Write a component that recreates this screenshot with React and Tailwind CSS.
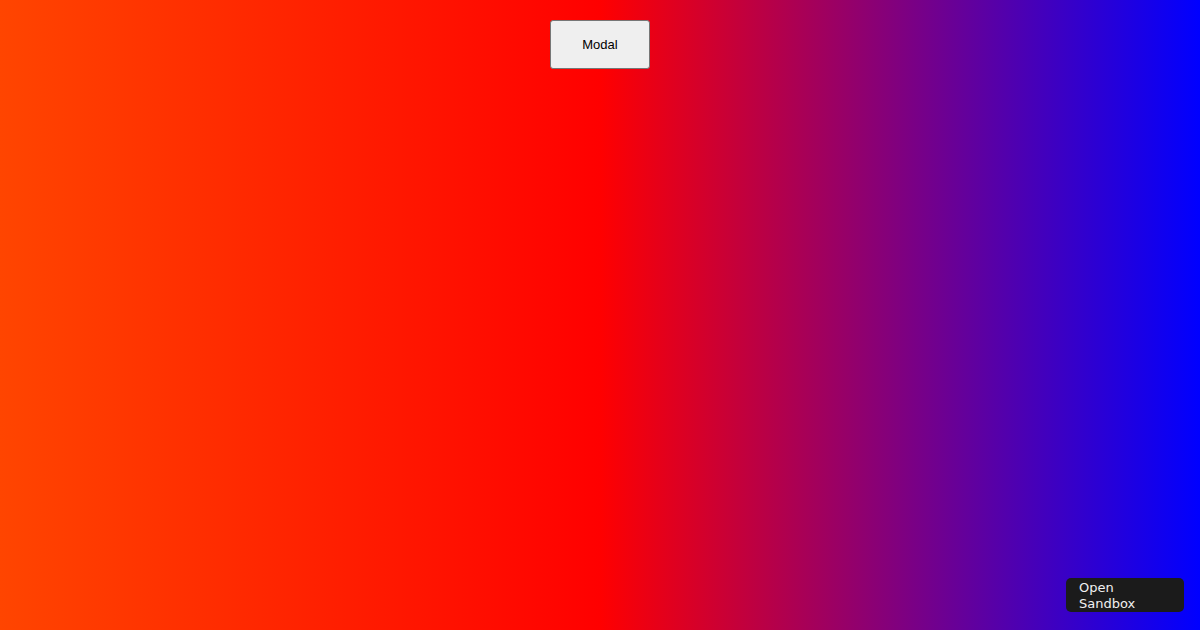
export default function App() {
  return (
    <div className="relative h-[630px] w-[1200px] overflow-hidden bg-[linear-gradient(to_right,#ff4500,#ff0000,#0000ff)]">
      <div className="flex justify-center pt-5">
        <button className="h-[49px] w-[100px] rounded-[3px] border border-[#767676] bg-[#efefef] text-[13px] text-black [font-family:'Liberation_Sans',Arial,sans-serif]">
          Modal
        </button>
      </div>
      <div className="absolute right-4 bottom-[18px] h-[34px] w-[118px] rounded-[5px] bg-[#1b1b1b] pl-[13px] pr-2 pt-[2px] text-[13px] leading-[16px] text-[#f0f0f0] [font-family:'DejaVu_Sans',sans-serif]">
        <div className="w-[60px]">Open Sandbox</div>
      </div>
    </div>
  );
}
